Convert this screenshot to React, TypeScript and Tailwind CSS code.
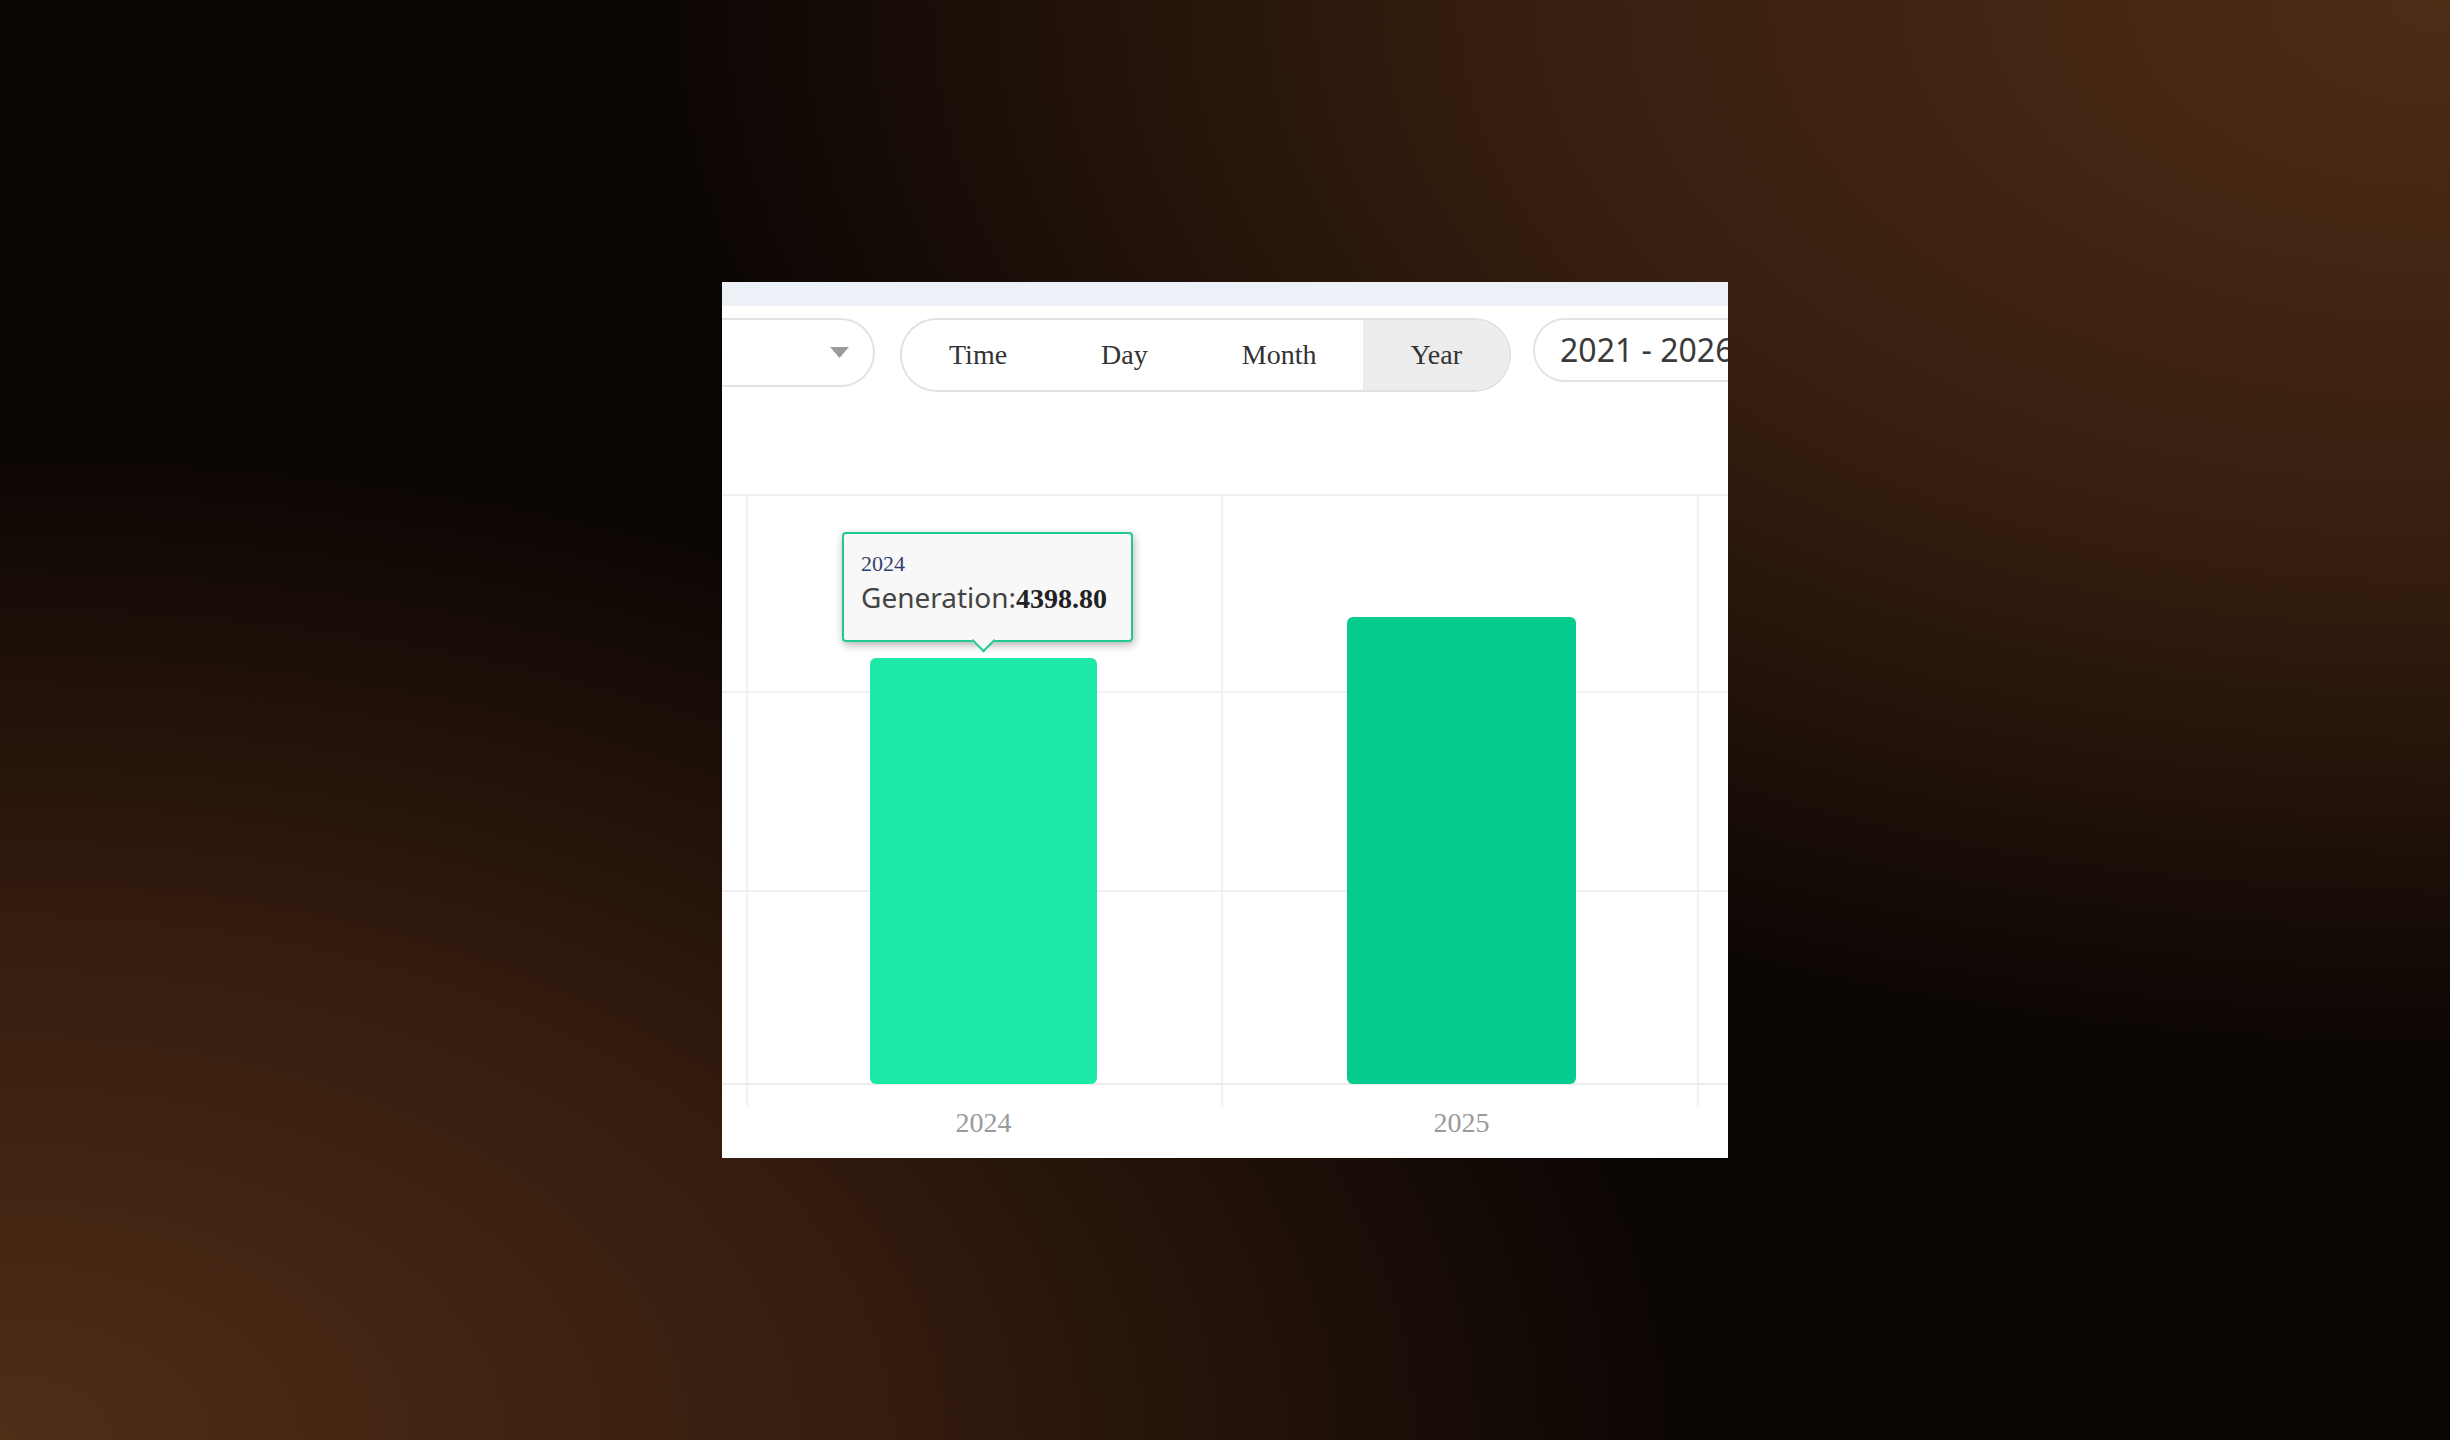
const tabs = ["Time", "Day", "Month", "Year"];
const active = "Year";

const bars = [
  { label: "2024", x: 148, y: 173, w: 227, fill: "#1ce8a8" },
  { label: "2025", x: 625, y: 132, w: 229, fill: "#05cb8e" },
];

function Chart() {
  return (
    <div className="relative mt-[93px] h-[673px] w-full">
      <svg width="1006" height="673" viewBox="0 0 1006 673" className="block">
        {[10, 207, 406].map((y) => (
          <line key={y} x1="0" x2="1006" y1={y} y2={y} stroke="#f1f1f1" strokeWidth="2" />
        ))}
        {[25, 500, 976].map((x) => (
          <line key={x} x1={x} x2={x} y1="10" y2="621" stroke="#f1f1f1" strokeWidth="2" />
        ))}
        <line x1="0" x2="1006" y1="599" y2="599" stroke="#ececec" strokeWidth="2" />
        {bars.map((b) => (
          <g key={b.label}>
            <rect x={b.x} y={b.y} width={b.w} height={599 - b.y} rx="6" fill={b.fill} />
            <text
              x={b.x + b.w / 2}
              y="647"
              textAnchor="middle"
              fill="#9a9a9a"
              fontSize="28"
              fontFamily="'Liberation Serif', 'Times New Roman', serif"
            >
              {b.label}
            </text>
          </g>
        ))}
      </svg>

      {/* hover tooltip */}
      <div className="absolute left-[120px] top-[47px] h-[110px] w-[291px] rounded-[4px] border-2 border-[#22c98e] bg-[#f8f8f8] pl-[17px] pt-[19px] shadow-[1px_3px_8px_rgba(0,0,0,0.3)]">
        <p className="font-['Liberation_Serif',serif] text-[22px] leading-none text-[#33406f]">2024</p>
        <p className="mt-[8px] whitespace-nowrap font-['Noto_Sans',sans-serif] text-[28px] leading-none text-[#444]">
          Generation:
          <span className="font-['Liberation_Serif',serif] font-bold text-[#222]">4398.80</span>
        </p>
        <div className="absolute left-[131px] top-[98px] h-[17px] w-[17px] rotate-45 border-b-2 border-r-2 border-[#22c98e] bg-[#f8f8f8]" />
      </div>
    </div>
  );
}

export default function App() {
  return (
    <div className="h-[1440px] w-[2450px] overflow-hidden bg-[#0a0503] bg-[image:radial-gradient(ellipse_85%_85%_at_100%_0%,#4e2c16_0%,#361e0f_45%,transparent_88%),radial-gradient(ellipse_80%_80%_at_0%_100%,#502d17_0%,#341c0e_45%,transparent_88%)] pl-[722px] pt-[282px]">
      <section className="h-[876px] w-[1006px] overflow-hidden bg-white">
        <div className="h-[24px] bg-[#ebf1f7]" />

        <div className="mt-[12px] flex items-start">
          {/* station select, cut off on the left */}
          <div className="-ml-[147px] flex h-[69px] w-[300px] shrink-0 items-center justify-end rounded-full border-2 border-[#e3e3e3] pr-[24px]">
            <svg width="19" height="11" viewBox="0 0 19 11">
              <path d="M0 0h19L9.5 11z" fill="#9b9b9b" />
            </svg>
          </div>

          <div className="ml-[25px] flex h-[74px] shrink-0 overflow-hidden rounded-full border-2 border-[#e1e1e1]">
            {tabs.map((t) => (
              <button
                key={t}
                type="button"
                className={
                  "px-[47px] font-['Liberation_Serif',serif] text-[28px] text-[#333] " +
                  (t === active ? "bg-[#ededed]" : "bg-white")
                }
              >
                {t}
              </button>
            ))}
          </div>

          <div className="ml-[22px] flex h-[64px] shrink-0 items-center whitespace-nowrap rounded-full border-2 border-[#e3e3e3] pl-[25px] pr-[40px] font-['Noto_Sans',sans-serif] text-[32px] text-[#3a3a3a]">
            2021 - 2026
          </div>
        </div>

        <Chart />
      </section>
    </div>
  );
}
